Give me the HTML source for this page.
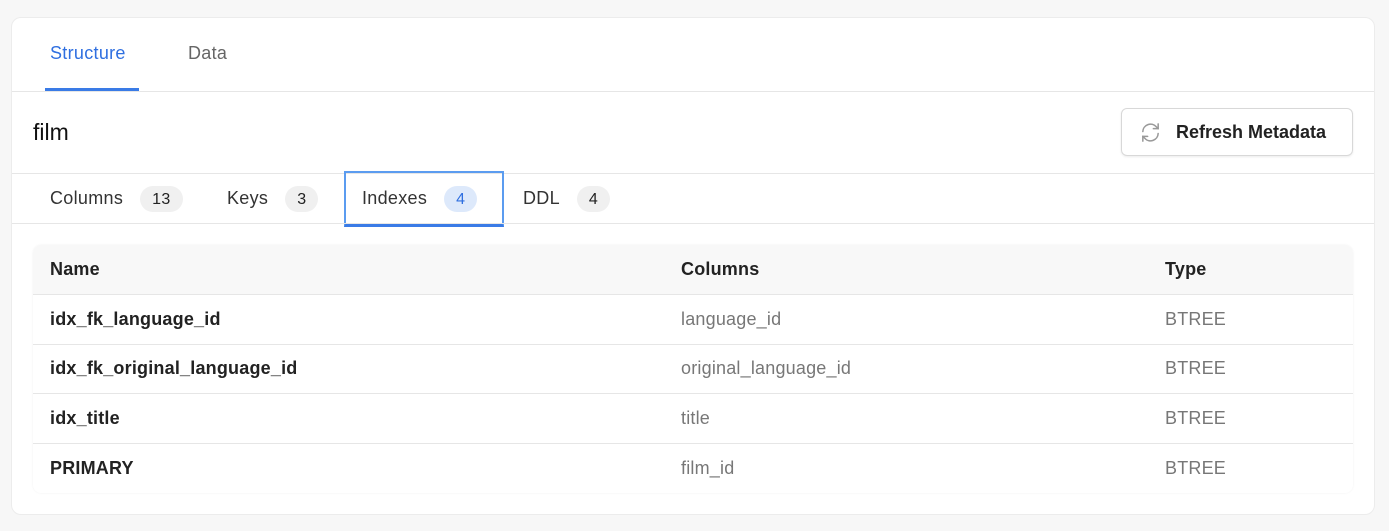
<!DOCTYPE html><html><head><style>
body{margin:0;background:#f7f7f7;font-family:"Liberation Sans",sans-serif;width:1389px;height:531px;overflow:hidden;position:relative}
.card{position:absolute;left:11px;top:17px;width:1364px;height:498px;background:#fff;border-radius:10px;border:1px solid #ececec;box-sizing:border-box}
.a{position:absolute;white-space:nowrap}
.hl{position:absolute;left:0;right:0;height:1px;background:#e6e6e6}
.badge{display:inline-block;background:#f0f0f0;border-radius:13px;height:26px;line-height:28px;padding:0 12px;font-size:16px;color:#222;margin-left:17px;vertical-align:middle}
.sub{font-size:18px;color:#333;line-height:24px;letter-spacing:.3px}
.tbl{position:absolute;left:21px;top:227px;width:1320px;height:248px;border-radius:8px;overflow:hidden;background:#fff;box-shadow:0 0 2px rgba(0,0,0,.06)}
.row{position:absolute;left:0;width:100%;height:49px;border-bottom:1px solid #e6e6e6;font-size:18px;letter-spacing:.2px}
.row span{position:absolute;top:14px}
.row span:first-child{font-weight:bold;color:#222}
</style></head><body>
<div class="card">
<div class="a" style="left:38px;top:25px;font-size:18px;color:#2f6fe0;letter-spacing:.3px">Structure</div>
<div class="a" style="left:33px;top:70px;width:94px;height:3px;background:#3a7be6"></div>
<div class="a" style="left:176px;top:25px;font-size:18px;color:#666;letter-spacing:.3px">Data</div>
<div class="hl" style="top:73px"></div>
<div class="a" style="left:21px;top:101px;font-size:23px;color:#111">film</div>
<div class="a" style="left:1109px;top:90px;width:232px;height:48px;border:1px solid #d8d8d8;border-radius:6px;box-sizing:border-box;box-shadow:0 1px 2px rgba(0,0,0,.08)">
<svg style="position:absolute;left:17px;top:12px" width="23" height="23" viewBox="0 0 24 24" fill="none" stroke="#999" stroke-width="1.6" stroke-linecap="round"><path d="M4 11a8 8 0 0 1 14-5l2 2"/><path d="M20 3v5h-5"/><path d="M20 13a8 8 0 0 1-14 5l-2-2"/><path d="M4 21v-5h5"/></svg>
<div class="a" style="left:54px;top:13px;font-size:18px;font-weight:bold;color:#222">Refresh Metadata</div></div>
<div class="hl" style="top:155px"></div>
<div class="a sub" style="left:38px;top:168px">Columns<span class="badge">13</span></div>
<div class="a sub" style="left:215px;top:168px">Keys<span class="badge">3</span></div>
<div class="a" style="left:332px;top:153px;width:160px;height:56px;border:2px solid #5b9cf0;border-bottom:4px solid #3a7be6;box-sizing:border-box"></div>
<div class="a sub" style="left:350px;top:168px">Indexes<span class="badge" style="background:#dde9fb;color:#2f6fe0">4</span></div>
<div class="a sub" style="left:511px;top:168px">DDL<span class="badge">4</span></div>
<div class="hl" style="top:205px"></div>
<div class="tbl">
<div class="row" style="top:0;background:#f8f8f8;font-weight:bold;color:#222"><span style="left:17px">Name</span><span style="left:648px">Columns</span><span style="left:1132px">Type</span></div>
<div class="row" style="top:50px"><span style="left:17px">idx_fk_language_id</span><span style="left:648px;color:#777">language_id</span><span style="left:1132px;color:#777">BTREE</span></div>
<div class="row" style="top:99px"><span style="left:17px">idx_fk_original_language_id</span><span style="left:648px;color:#777">original_language_id</span><span style="left:1132px;color:#777">BTREE</span></div>
<div class="row" style="top:149px"><span style="left:17px">idx_title</span><span style="left:648px;color:#777">title</span><span style="left:1132px;color:#777">BTREE</span></div>
<div class="row" style="top:199px;border-bottom:none"><span style="left:17px">PRIMARY</span><span style="left:648px;color:#777">film_id</span><span style="left:1132px;color:#777">BTREE</span></div>
</div>
</div>
</body></html>
